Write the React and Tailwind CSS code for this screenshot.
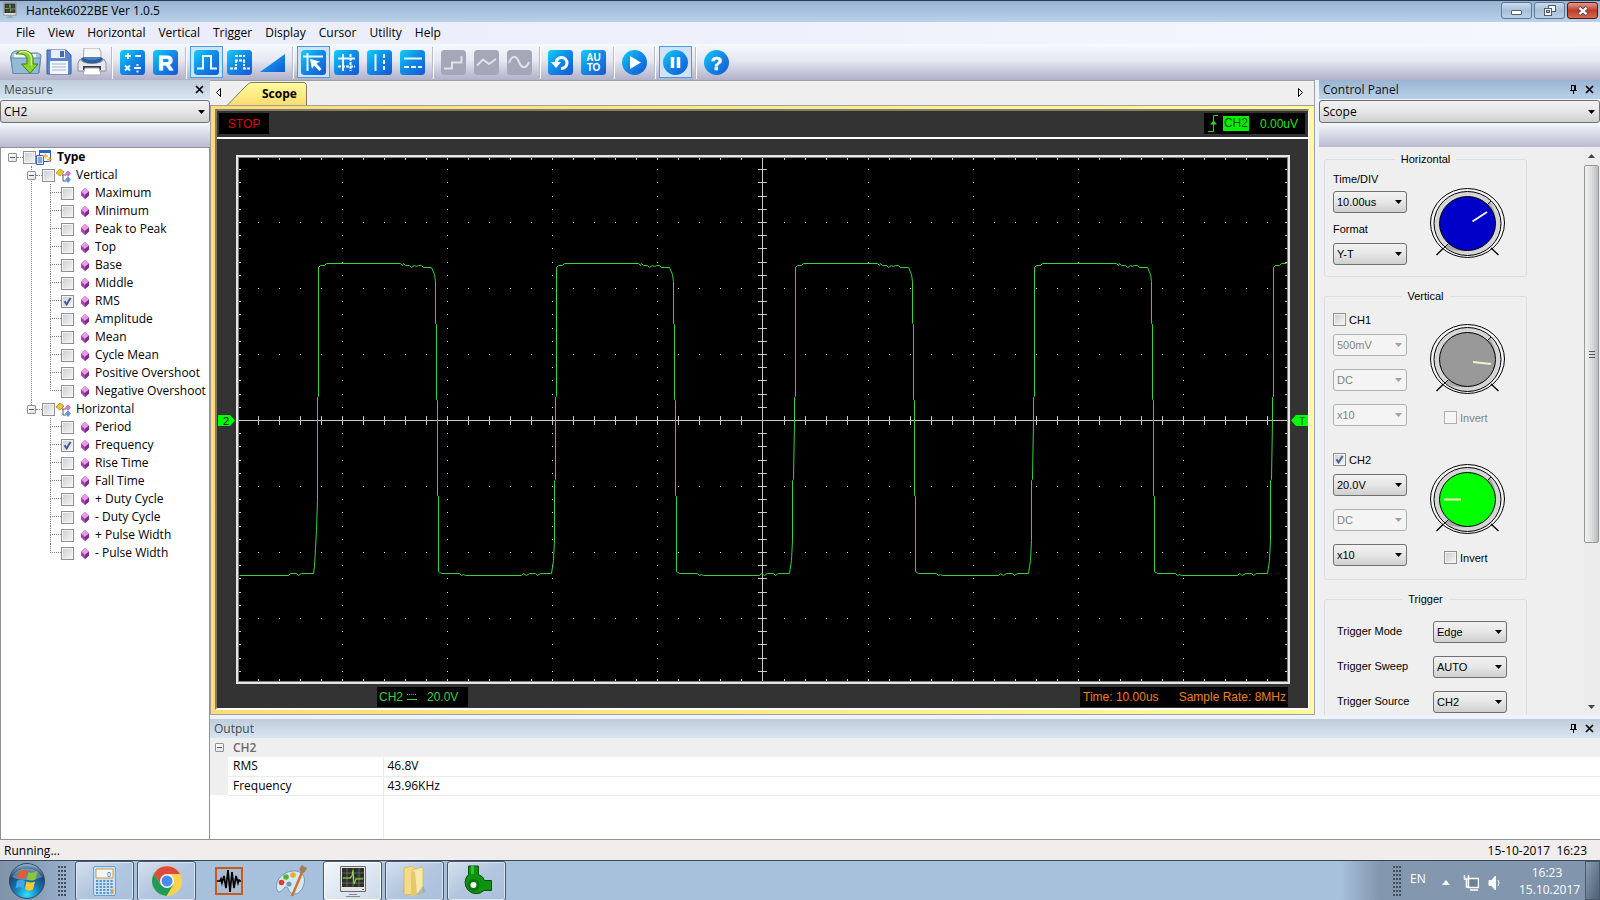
import { useState } from 'react';
import clsx from 'clsx';

const MENUS = ['File', 'View', 'Horizontal', 'Vertical', 'Trigger', 'Display', 'Cursor', 'Utility', 'Help'];

const VERTICAL_ITEMS = [
  'Maximum', 'Minimum', 'Peak to Peak', 'Top', 'Base', 'Middle', 'RMS',
  'Amplitude', 'Mean', 'Cycle Mean', 'Positive Overshoot', 'Negative Overshoot'
];

const HORIZONTAL_ITEMS = [
  'Period', 'Frequency', 'Rise Time', 'Fall Time',
  '+ Duty Cycle', '- Duty Cycle', '+ Pulse Width', '- Pulse Width'
];

const MEASUREMENTS = [
  { name: 'RMS', value: '46.8V' },
  { name: 'Frequency', value: '43.96KHz' }
];

const TRIGGER_FIELDS = [
  { id: 'trigger-mode', label: 'Trigger Mode', value: 'Edge' },
  { id: 'trigger-sweep', label: 'Trigger Sweep', value: 'AUTO' },
  { id: 'trigger-source', label: 'Trigger Source', value: 'CH2' }
];

/* ---------- Shared controls ---------- */

function Select({ id, label, value, disabled, className }) {
  return (
    <div className={clsx('relative', className)}>
      <select
        id={id}
        aria-label={label}
        defaultValue={value}
        disabled={disabled}
        className={clsx(
          'block h-full w-full appearance-none rounded-[3px] border pl-[3px] outline-none',
          disabled
            ? 'border-[#adb2b5] bg-[#f4f4f4] text-[#838383] opacity-100'
            : 'border-[#707070] bg-linear-to-b from-[#f2f2f2] via-[#e6e6e6] to-[#cfcfcf] text-black'
        )}
      >
        <option>{value}</option>
      </select>
      <svg
        viewBox="0 0 7 4"
        className={clsx(
          'pointer-events-none absolute right-[5px] top-1/2 h-1 w-[7px] -translate-y-1/2',
          disabled ? 'fill-[#a0a0a0]' : 'fill-black'
        )}
      >
        <path d="M0 0h7L3.5 4z" />
      </svg>
    </div>
  );
}

function Checkbox({ id, checked, disabled }) {
  const [on, setOn] = useState(!!checked);
  return (
    <span className="relative block size-[13px] shrink-0">
      <input
        id={id}
        type="checkbox"
        checked={on}
        disabled={disabled}
        onChange={e => setOn(e.target.checked)}
        className={clsx(
          'block size-[13px] appearance-none border',
          disabled
            ? 'border-[#b1b1b1] bg-[#f6f6f6]'
            : 'border-[#8e8f8f] bg-linear-to-br from-[#c9cdd2] to-[#f6f6f6] shadow-[inset_0_0_0_1px_#f4f4f4]'
        )}
      />
      {on && (
        <svg viewBox="0 0 13 13" className="pointer-events-none absolute inset-0">
          <path d="M3.5 6.2 5.6 9.4 9.6 3" fill="none" stroke="#4b5f9c" strokeWidth="2" />
        </svg>
      )}
    </span>
  );
}

function PinIcon() {
  return (
    <svg viewBox="0 0 9 9" className="size-[9px]" shapeRendering="crispEdges">
      <path d="M2 0h5v5h1v1H5v3H4V6H1V5h1zM3 1v4h2V1z" fillRule="evenodd" />
    </svg>
  );
}

function CloseIcon() {
  return (
    <svg viewBox="0 0 9 9" className="size-[9px]">
      <path d="M1 1l7 7M8 1 1 8" stroke="#000" strokeWidth="1.7" />
    </svg>
  );
}

function PanelHeader({ title, active, pin }) {
  return (
    <div
      className={clsx(
        'flex h-[19px] shrink-0 items-center pl-1 pr-1.5 leading-[19px]',
        active
          ? 'bg-linear-to-b from-[#99b4d1] to-[#b9d1ea] text-[#111]'
          : 'bg-linear-to-b from-[#bfcddb] to-[#d7e4f2] text-[#434e54]'
      )}
    >
      <h2 className="flex-1">{title}</h2>
      {pin && (
        <button aria-label={`Pin ${title}`} className="mr-[7px]">
          <PinIcon />
        </button>
      )}
      <button aria-label={`Close ${title}`}>
        <CloseIcon />
      </button>
    </div>
  );
}

/* ---------- Title bar and toolbar ---------- */

function MonitorIcon({ className }) {
  return (
    <svg viewBox="0 0 28 32" className={className}>
      <path d="M1.5 1.5h25v25h-25z" fill="#e3e3df" stroke="#6b6b6b" />
      <path d="M3 3h22v19H3z" fill="#2a2f2a" />
      <path d="M3 8h22M3 13h22M3 18h22M8 3v19M14 3v19M20 3v19" stroke="#777d77" strokeWidth=".7" />
      <path d="M4 13h7l2-2 1-6 1 14 2-5h7" fill="none" stroke="#8fe03a" strokeWidth="1.1" />
      <path d="M23 24h2v1h-2z" fill="#d33" />
      <path d="M10 29h8v1h-8zM7 31h14v1H7z" fill="#888" />
    </svg>
  );
}

function TitleBar() {
  return (
    <header className="flex h-[22px] shrink-0 items-start border-t border-[#2b3a50] bg-linear-to-b from-[#98b3d1] to-[#b9d1ea] pl-[3px] pr-[2px]">
      <MonitorIcon className="mt-px h-4 w-3.5" />
      <h1 className="ml-[9px] flex-1 leading-5">Hantek6022BE Ver 1.0.5</h1>
      <div className="flex gap-0.5 pt-px">
        <button aria-label="Minimize" className="flex h-[17px] w-[31px] items-center justify-center rounded-[3px] border border-[#5d7894] bg-linear-to-b from-[#c9dbee] via-[#a6bfda] to-[#b8cfe6]">
          <span className="mt-1 h-[5px] w-[11px] rounded-[1px] border border-[#555f6b] bg-white" />
        </button>
        <button aria-label="Restore" className="flex h-[17px] w-[31px] items-center justify-center rounded-[3px] border border-[#5d7894] bg-linear-to-b from-[#c9dbee] via-[#a6bfda] to-[#b8cfe6]">
          <svg viewBox="0 0 12 11" className="h-[11px] w-3" fill="#f4f7fa" stroke="#535d69" shapeRendering="crispEdges">
            <path d="M4.5.5h7v6h-7z" />
            <path d="M.5 3.5h7v7h-7z" />
            <path d="M2.5 5.5h3v2h-3z" fill="#a6bfda" />
          </svg>
        </button>
        <button aria-label="Close" className="flex h-[17px] w-[31px] items-center justify-center rounded-[3px] border border-[#5a1712] bg-linear-to-b from-[#dd9a8c] via-[#bf3b26] to-[#d26a50]">
          <svg viewBox="0 0 12 10" className="h-2.5 w-3">
            <path d="M2 1.5l8 7M10 1.5l-8 7" stroke="#5c4048" strokeWidth="4" />
            <path d="M2.4 1.8l7.2 6.4M9.6 1.8 2.4 8.2" stroke="#fff" strokeWidth="2.3" />
          </svg>
        </button>
      </div>
    </header>
  );
}

function Blue({ children, round, gray }) {
  return (
    <svg viewBox="0 0 25 25" className="size-[25px]" fill="none" stroke={gray ? '#dfe2ea' : '#e8fbff'} strokeWidth="2">
      <defs>
        <linearGradient id="blueFill" x1="0" y1="0" x2="1" y2="1">
          <stop offset="0" stopColor="#10d0f8" />
          <stop offset=".45" stopColor="#118ee8" />
          <stop offset="1" stopColor="#1556d4" />
        </linearGradient>
      </defs>
      {round ? (
        <circle cx="12.5" cy="12.5" r="12.5" fill="url(#blueFill)" stroke="none" />
      ) : (
        <rect width="25" height="25" rx="3.5" fill={gray ? '#a3a7b7' : 'url(#blueFill)'} stroke="none" />
      )}
      {children}
    </svg>
  );
}

function ToolButton({ label, active, children }) {
  return (
    <button
      aria-label={label}
      className={clsx(
        'flex h-8 w-[33px] items-center justify-center border',
        active ? 'border-[#4a9be8] bg-[#cfe3f8]' : 'border-transparent'
      )}
    >
      {children}
    </button>
  );
}

function Separator() {
  return <span className="mx-[3px] mt-px h-8 w-0.5 border-l border-r border-l-[#b9bccb] border-r-white" />;
}

const glyphFont = 'font-["Liberation_Sans"] font-bold';

function Toolbar() {
  return (
    <div role="toolbar" className="flex h-9 shrink-0 items-start bg-linear-to-b from-[#f6f9fd] via-[#e6e8f2] via-45% to-[#b1b1c9] pl-[9px] pt-[2px]">
      <ToolButton label="Open">
        <svg viewBox="0 0 32 27" className="h-[27px] w-8 shrink-0">
          <path d="M2 4l3-2h8l2 2h13l3 2-2 18H3L.5 8z" fill="#a9c6da" stroke="#5b86a5" />
          <path d="M4 5h22v4H4z" fill="#eef5fa" />
          <path d="M1 9h29.5l-2 15.500H3z" fill="#94bad4" stroke="#5f8dad" />
          <path d="M6 5C8 1 20-1 23 8v7h5l-8 9.500L11.500 15H17V9C15 4 9 5 6 5z" fill="#8ed02c" stroke="#3c7f10" />
          <path d="M9 3.500c5-2 11-1 12.500 5v8" fill="none" stroke="#d3f28a" strokeWidth="1.5" />
        </svg>
      </ToolButton>
      <ToolButton label="Save">
        <svg viewBox="0 0 26 26" className="size-[26px]">
          <path d="M1 1h19l5 5v19H1z" fill="#5d87d2" stroke="#3c5da5" />
          <path d="M5 1h14v8H5z" fill="#e9eff8" />
          <path d="M14 2h4v6h-4z" fill="#4569b3" />
          <path d="M4 12h18v13H4z" fill="#f5f8fc" />
          <path d="M6 15h14M6 18h14M6 21h14" stroke="#9fb4d3" />
        </svg>
      </ToolButton>
      <ToolButton label="Print">
        <svg viewBox="0 0 30 28" className="h-7 w-[30px] shrink-0">
          <path d="M7 0h15l2 4v8H6z" fill="#f7f7f8" stroke="#a7a7ad" />
          <path d="M6 9h18v6H6z" fill="#4d82bd" />
          <path d="M3 11c2 6 22 6 24 0l2 4v8H1v-8z" fill="#e6e8ec" stroke="#8c8f99" />
          <path d="M5 10c3 5 17 5 20 0" fill="none" stroke="#2e5e9c" strokeWidth="3" />
          <path d="M6 18h18v4H6z" fill="#3b3e47" />
          <path d="M8 20h14l2 7H6z" fill="#fff" stroke="#a7a7ad" />
        </svg>
      </ToolButton>
      <Separator />
      <ToolButton label="Math">
        <Blue>
          <path d="M5 6h6M8 3v6M15 6h6M5 15.500l5 5M10 15.500l-5 5M14 18h7" />
          <path d="M17.500 14v2M17.500 20.500v2" />
        </Blue>
      </ToolButton>
      <ToolButton label="Reference">
        <Blue>
          <text x="12.500" y="20" textAnchor="middle" fontSize="21" fill="#fff" stroke="#fff" strokeWidth=".8" className={glyphFont}>R</text>
        </Blue>
      </ToolButton>
      <Separator />
      <ToolButton label="Square wave" active>
        <Blue><path d="M3 18.500h6V6h8v12.500h6" /></Blue>
      </ToolButton>
      <ToolButton label="Persist wave">
        <Blue>
          <path d="M8 6h10M8 10.500h10" strokeDasharray="3 1" />
          <path d="M9 11v7M17 11v7" strokeDasharray="2 1" />
          <path d="M3 18.500h7M16 18.500h7" strokeDasharray="3 1" />
        </Blue>
      </ToolButton>
      <ToolButton label="Ramp">
        <svg viewBox="0 0 25 25" className="size-[25px]">
          <path d="M0 22 25 4v18z" fill="url(#blueFill)" />
        </svg>
      </ToolButton>
      <Separator />
      <ToolButton label="Cursor track" active>
        <Blue>
          <path d="M2 6.500h20M6.500 3v18" />
          <path d="M9 9l10 2.500-3.500 2 5 5.500-2 2-5.500-5.500-2 3.500z" fill="#fff" stroke="none" />
        </Blue>
      </ToolButton>
      <ToolButton label="Cross cursor">
        <Blue>
          <path d="M9 4v17M4 8.500h17" />
          <path d="M16.500 4v17M4 16.500h17" strokeDasharray="3 1" />
        </Blue>
      </ToolButton>
      <ToolButton label="Vertical cursor">
        <Blue>
          <path d="M8.500 4v17" />
          <path d="M17 4v18" strokeDasharray="4 2" />
        </Blue>
      </ToolButton>
      <ToolButton label="Horizontal cursor">
        <Blue>
          <path d="M4 8.500h18" />
          <path d="M4 17h18" strokeDasharray="5 2" />
        </Blue>
      </ToolButton>
      <Separator />
      <ToolButton label="Step">
        <Blue gray><path d="M3 18.500h8v-6h9.500V6" /></Blue>
      </ToolButton>
      <ToolButton label="Linear">
        <Blue gray><path d="M3 15.500 9 9.500l6 4.500 7-5" /></Blue>
      </ToolButton>
      <ToolButton label="Sine">
        <Blue gray><path d="M2 13C5 5 9 5 12 12s7 7 10 0" /></Blue>
      </ToolButton>
      <Separator />
      <ToolButton label="Refresh">
        <Blue>
          <path d="M8 13A5.500 5.500 0 1 1 13 18.500" strokeWidth="3" stroke="#fff" />
          <path d="M3 12h10l-5 6z" fill="#fff" stroke="none" />
        </Blue>
      </ToolButton>
      <ToolButton label="Auto set">
        <Blue>
          <text x="12.500" y="11" textAnchor="middle" fontSize="10" fill="#fff" stroke="none" className={glyphFont}>AU</text>
          <text x="12.500" y="21" textAnchor="middle" fontSize="10" fill="#fff" stroke="none" className={glyphFont}>TO</text>
        </Blue>
      </ToolButton>
      <Separator />
      <ToolButton label="Start">
        <Blue round><path d="M8 6v13l11-6.500z" fill="#fff" stroke="none" /></Blue>
      </ToolButton>
      <Separator />
      <ToolButton label="Pause" active>
        <Blue round><path d="M9.500 7v11M15.500 7v11" strokeWidth="3.5" stroke="#fff" /></Blue>
      </ToolButton>
      <Separator />
      <ToolButton label="Help">
        <Blue round>
          <text x="12.500" y="19.500" textAnchor="middle" fontSize="19" fill="#fff" stroke="#fff" strokeWidth=".6" className={glyphFont}>?</text>
        </Blue>
      </ToolButton>
    </div>
  );
}

/* ---------- Measure tree ---------- */

function Expander() {
  return (
    <span className="relative z-10 flex size-[9px] shrink-0 items-center justify-center rounded-[1px] border border-[#919191] bg-linear-to-br from-white to-[#e0e0e0]">
      <span className="h-px w-[5px] bg-[#3a5bb0]" />
    </span>
  );
}

function TreeItem({ name, last }) {
  const id = `measure-${name}`;
  return (
    <li className="flex h-[18px] items-center">
      <span className="w-[11px] shrink-0">
        <span className="block h-[9px] border-b border-l border-dotted border-[#808080]" />
        <span className={clsx('block h-[9px]', !last && 'border-l border-dotted border-[#808080]')} />
      </span>
      <Checkbox id={id} checked={name === 'RMS' || name === 'Frequency'} />
      <svg viewBox="0 0 8 11" className="ml-[7px] h-[11px] w-2 shrink-0">
        <path d="M4 0l4 3.500v4L4 11 0 7.500v-4z" fill="#a344a8" />
        <path d="M4 0l4 3.500L4 7 0 3.500z" fill="#e69ae8" />
        <path d="M4 7l4-3.500v4L4 11z" fill="#7c2c86" />
      </svg>
      <label htmlFor={id} className="ml-1.5 whitespace-nowrap">{name}</label>
    </li>
  );
}

function TreeGroup({ name, items, last }) {
  const id = `group-${name}`;
  return (
    <li className={clsx('relative ml-[30px]', last ? 'pl-px' : 'border-l border-dotted border-[#808080]')}>
      {last && <span className="absolute left-0 top-0 h-[9px] border-l border-dotted border-[#808080]" />}
      <div className="-ml-[5px] flex h-[18px] items-center">
        <Expander />
        <span className="w-1.5 shrink-0 border-t border-dotted border-[#808080]" />
        <Checkbox id={id} />
        <svg viewBox="0 0 16 15" className="h-[15px] w-4 shrink-0">
          <path d="M1 5l4-4 4 3-4 4z" fill="#f1c232" stroke="#a77b10" strokeWidth=".7" />
          <path d="M7 7h4M8 7v6h3" fill="none" stroke="#557" />
          <path d="M13 3l2.500 2.500L13 8.500l-2.500-3z" fill="#d976dc" stroke="#94389a" strokeWidth=".5" />
          <path d="M13 9l2.500 2.500L13 14.500l-2.500-3z" fill="#5b9bea" stroke="#2a5ea8" strokeWidth=".5" />
        </svg>
        <label htmlFor={id} className="ml-[5px]">{name}</label>
      </div>
      <ul className="ml-[18px]">
        {items.map((item, i) => (
          <TreeItem key={item} name={item} last={i === items.length - 1} />
        ))}
      </ul>
    </li>
  );
}

function MeasurePanel() {
  return (
    <aside className="flex w-[210px] shrink-0 flex-col">
      <PanelHeader title="Measure" />
      <Select label="Measure source" value="CH2" className="mt-px h-[23px]" />
      <div className="h-6 shrink-0 bg-linear-to-b from-[#f4f7fc] to-[#babad0]" />
      <ul className="flex-1 border border-[#8f9299] bg-white">
        <li>
          <div className="flex h-[18px] items-center pl-[7px]">
            <Expander />
            <span className="w-1.5 shrink-0 border-t border-dotted border-[#808080]" />
            <Checkbox id="measure-type" />
            <svg viewBox="0 0 16 15" className="h-[15px] w-4 shrink-0">
              <path d="M3.500.5h11v11h-11z" fill="#fff" stroke="#2b55b5" />
              <path d="M3 0h12v3H3z" fill="#2b62d0" />
              <path d="M.5 5.500h7v9h-7z" fill="#dbe8fb" stroke="#3d62b5" />
              <path d="M2 8h4M2 10h4M2 12h4" stroke="#3d62b5" />
              <path d="M7 6h5M9.500 3.500v5M11 9.500h5M13.500 7v5" stroke="#e8b818" strokeWidth="1.500" />
            </svg>
            <label htmlFor="measure-type" className="ml-[5px] font-bold">Type</label>
          </div>
          <ul>
            <TreeGroup name="Vertical" items={VERTICAL_ITEMS} />
            <TreeGroup name="Horizontal" items={HORIZONTAL_ITEMS} last />
          </ul>
        </li>
      </ul>
    </aside>
  );
}

/* ---------- Scope ---------- */

// one full cycle of the trace, relative to its rising edge
const CYCLE = [
  [0, 420], [0, 397], [1, 396], [1, 267], [3, 265], [7, 265], [9, 263], [83, 263],
  [85, 265], [86, 263], [88, 265], [92, 265], [94, 267], [97, 265], [99, 266], [101, 265], [104, 265],
  [106, 267], [114, 267], [117, 274], [118, 281], [118, 323], [119, 324], [119, 399], [120, 400],
  [120, 495], [121, 496], [121, 571], [124, 573], [142, 573], [144, 575], [146, 574], [148, 575],
  [204, 575], [206, 573], [209, 575], [212, 573], [218, 573], [220, 575], [223, 573], [234, 573],
  [236, 560], [237, 540], [237, 480], [238, 479]
];

const EDGES = [317, 555, 794, 1033, 1272];

function tracePoints() {
  const pts = [[239, 575], [288, 575], [290, 573], [296, 573], [298, 575], [301, 573], [313, 573], [314, 566], [315, 548], [316, 530], [317, 500]];
  EDGES.forEach(x => {
    CYCLE.forEach(([dx, y]) => {
      if (x + dx <= 1287) pts.push([x + dx, y]);
    });
  });
  pts.push([1286, 263]);
  return pts.map(([x, y]) => `${x + 0.5},${y + 0.5}`).join(' ');
}

const gridX = i => 237 + i * 21 + (i > 25 ? 1 : 0);
const gridY = i => Math.round(420 + (i - 20) * 13.2);

function Graticule() {
  const dots = [];
  const ticks = [];
  for (let i = 1; i < 50; i++) {
    const x = gridX(i);
    ticks.push(`M${x} 158v2h1v-2zM${x} 679v2h1v-2zM${x} 416v9h1v-9z`);
    for (let j = 5; j < 40; j += 5) dots.push(`M${x} ${gridY(j)}h1v1h-1z`);
  }
  for (let j = 1; j < 40; j++) {
    const y = gridY(j);
    ticks.push(`M239 ${y}h2v1h-2zM1285 ${y}h2v1h-2zM758 ${y}h9v1h-9z`);
    for (let i = 5; i < 50; i += 5) dots.push(`M${gridX(i)} ${y}h1v1h-1z`);
  }
  return (
    <svg viewBox="236 155 1054 529" preserveAspectRatio="none" className="block h-full w-full min-w-0 flex-1">
      <g shapeRendering="crispEdges">
        <path d="M236 155h1054v529H236z" fill="#e6e6e6" />
        <path d="M238 157h1050v525H238z" fill="#808080" />
        <path d="M239 158h1048v523H239z" fill="#000" />
        <path d={dots.join('')} fill="#f0f0f0" />
        <path d={ticks.join('')} fill="#c8c8c8" />
        <path d="M239 420h1048v1H239z" fill="#c8c8c8" />
        <path d="M762 158h1v523h-1z" fill="#c8c8c8" />
      </g>
      <polyline points={tracePoints()} fill="none" stroke="#35d53a" strokeWidth="1" />
    </svg>
  );
}

function ScopeView() {
  return (
    <main className="flex min-w-0 flex-1 flex-col border-r border-[#a0a0a0]">
      {/* Tabs */}
      <div className="flex h-[25px] shrink-0 items-end border-t border-[#a0a0a0] bg-[#efefef] pl-1.5">
        <button aria-label="Previous tab" className="mb-2">
          <svg viewBox="0 0 5 9" className="h-[9px] w-[5px]"><path d="M4.500.5v8l-4-4z" fill="none" stroke="#000" /></svg>
        </button>
        <button role="tab" aria-selected="true" className="relative ml-1.5 h-[23px] w-20 pl-[35px] text-left font-bold leading-[22px]">
          <svg viewBox="0 0 80 23" className="absolute inset-0 h-full w-full">
            <defs>
              <linearGradient id="tabFill" x1="0" y1="0" x2="0" y2="1">
                <stop offset="0" stopColor="#fffb9c" />
                <stop offset="1" stopColor="#fddb70" />
              </linearGradient>
            </defs>
            <path d="M0 23.500 20 3q2-2.500 5-2.500h52.500l2 2v21" fill="url(#tabFill)" stroke="#7d7d6a" />
          </svg>
          <span className="relative">Scope</span>
        </button>
        <button aria-label="Next tab" className="mb-2 ml-auto mr-[11px]">
          <svg viewBox="0 0 5 9" className="h-[9px] w-[5px]"><path d="M.5.5v8l4-4z" fill="none" stroke="#000" /></svg>
        </button>
      </div>

      {/* Yellow frame */}
      <div className="flex min-h-0 flex-1 flex-col border-b border-l border-t border-[#a0a0a0] bg-linear-to-r from-[#fddb75] to-[#fffa9c] pb-1 pl-1 pr-[5px] pt-[3px]">
        <div className="flex min-h-0 flex-1 flex-col border-b-2 border-l-2 border-r border-t-2 border-b-white border-l-[#807c6c] border-r-white border-t-[#807c6c] bg-[#333] font-['Liberation_Sans'] text-[12px]">
          <div className="flex h-7 shrink-0 items-start justify-between border-b-2 border-white pl-[2px] pr-[3px] pt-[2px]">
            <div className="flex h-[21px] w-[50px] items-center justify-center bg-black text-[#e00000]">STOP</div>
            <div className="flex h-[21px] items-center bg-black pl-1 pr-[7px] text-[#1fe01f]">
              <svg viewBox="0 0 10 17" className="h-[17px] w-2.5" fill="none" stroke="#1fe01f">
                <path d="M0 16.500h5.500v-16H10" />
                <path d="M2 9.500h7L5.500 5.500z" fill="#1fe01f" stroke="none" />
              </svg>
              <span className="ml-[5px] bg-[#00f000] px-px leading-[15px] text-[#0c4a0c]">CH2</span>
              <span className="ml-[11px]">0.00uV</span>
            </div>
          </div>

          <div className="flex min-h-0 flex-1 pt-4">
            <div className="flex w-[19px] shrink-0 items-center pl-px pt-[2px]">
              <svg viewBox="0 0 17 11" className="h-[11px] w-[17px]">
                <path d="M0 0h12l5 5.500-5 5.500H0z" fill="#0f0" />
                <text x="8" y="9.500" textAnchor="middle" fontSize="11" fill="#000" className="font-['Liberation_Sans']">2</text>
              </svg>
            </div>
            <Graticule />
            <div className="flex w-[18px] shrink-0 items-center pl-px pt-[2px]">
              <svg viewBox="0 0 17 11" className="h-[11px] w-[17px]">
                <path d="M17 0H5L0 5.500 5 11h12z" fill="#0f0" />
                <text x="11" y="9.500" textAnchor="middle" fontSize="11" fill="#063" className="font-['Liberation_Sans']">T</text>
              </svg>
            </div>
          </div>

          <div className="flex shrink-0 justify-between pb-px pl-40 pr-5 pt-[3px] leading-5">
            <div className="flex items-center bg-black pl-[2px] pr-2.5 text-[#35d53a]">
              CH2
              <svg viewBox="0 0 10 6" className="ml-1 h-1.5 w-2.5" stroke="#35d53a" shapeRendering="crispEdges">
                <path d="M0 .5h10" strokeDasharray="1 1" />
                <path d="M0 5.500h10" />
              </svg>
              <span className="ml-2.5">20.0V</span>
            </div>
            <div className="flex gap-5 bg-black pl-[3px] pr-[2px] text-[#f08018]">
              <span>Time: 10.00us</span>
              <span>Sample Rate: 8MHz</span>
            </div>
          </div>
        </div>
      </div>
    </main>
  );
}

/* ---------- Control panel ---------- */

function Knob({ color, pointer, pointerColor, label }) {
  return (
    <svg viewBox="0 0 75 70" role="img" aria-label={label} className="h-[70px] w-[75px]" stroke="#000">
      <ellipse cx="37.500" cy="35" rx="37" ry="34.500" fill="#f4f4f4" />
      <path d="M13.500 60 6.500 67M61 60l7.500 7" strokeWidth="1.3" />
      <ellipse cx="37.500" cy="35.500" rx="33.500" ry="32" fill="#d6d6d6" />
      <path d="M60 14A33.500 32 0 0 1 15 59L20 54 56 18z" fill="#ababab" stroke="none" />
      <path d="M56 18l5-5M18 56l-4 4" />
      <ellipse cx="37.500" cy="35.500" rx="28" ry="27" fill={color} />
      <path d={pointer} stroke={pointerColor} strokeWidth="2" />
    </svg>
  );
}

function Group({ title, children, className }) {
  return (
    <fieldset className={clsx('min-w-0 rounded-[3px] border border-[#d5dfe5]', className)}>
      <legend className="mx-auto h-3.5 px-1.5 leading-[14px]">{title}</legend>
      {children}
    </fieldset>
  );
}

function Channel({ name, scale, probe, on, color, pointer, pointerColor }) {
  return (
    <div className="flex">
      <div className="flex w-[74px] flex-col gap-[13px]">
        <div>
          <label className="mb-2 flex h-[13px] items-center gap-[3px]">
            <Checkbox checked={on} />
            {name}
          </label>
          <Select label={`${name} volts per division`} value={scale} disabled={!on} className="h-[22px]" />
        </div>
        <Select label={`${name} coupling`} value="DC" disabled className="h-[22px]" />
        <Select label={`${name} probe`} value={probe} disabled={!on} className="h-[22px]" />
      </div>
      <div className="ml-[23px] pt-[11px]">
        <Knob color={color} pointer={pointer} pointerColor={pointerColor} label={`${name} scale`} />
        <label className={clsx('ml-3.5 mt-[17px] flex h-[13px] items-center gap-[3px]', !on && 'text-[#838383]')}>
          <Checkbox disabled={!on} />
          Invert
        </label>
      </div>
    </div>
  );
}

function ControlPanel() {
  return (
    <aside className="flex w-[281px] shrink-0 flex-col bg-[#efefef]">
      <PanelHeader title="Control Panel" active pin />
      <Select label="Control page" value="Scope" className="mt-px h-[23px]" />
      <div className="h-6 shrink-0 bg-linear-to-b from-[#f4f7fc] to-[#babad0]" />

      <div className="flex min-h-0 flex-1">
        <div className="min-h-0 flex-1 overflow-hidden pl-[5px] pt-[5px] font-['Liberation_Sans'] text-[11px]">
          <div className="w-[203px]">
            <Group title="Horizontal" className="px-2 pb-[11px]">
              <div className="flex">
                <div className="w-[74px] pt-1.5">
                  <label htmlFor="time-div" className="block h-[19px] leading-[14px]">Time/DIV</label>
                  <Select id="time-div" value="10.00us" className="h-[22px]" />
                  <label htmlFor="format" className="mt-[9px] block h-[21px] leading-[14px]">Format</label>
                  <Select id="format" value="Y-T" className="h-[22px]" />
                </div>
                <div className="ml-[23px] pt-[22px]">
                  <Knob color="#0000c8" pointer="M42.500 33.500 57 24" pointerColor="#f4f4f4" label="Time base" />
                </div>
              </div>
            </Group>

            <Group title="Vertical" className="mt-3 flex flex-col gap-[27px] px-2 pb-[13px] pt-2.5">
              <Channel name="CH1" scale="500mV" probe="x10" color="#999" pointer="M43 38l18 2" pointerColor="#f4f4c0" />
              <Channel name="CH2" scale="20.0V" probe="x10" on color="#0f0" pointer="M14 35.500h17" pointerColor="#f4f4c0" />
            </Group>

            <Group title="Trigger" className="mt-3 px-3">
              <div className="flex flex-col gap-[13px] pb-3 pt-[15px]">
                {TRIGGER_FIELDS.map(f => (
                  <div key={f.id} className="flex h-[22px]">
                    <label htmlFor={f.id} className="w-24 leading-5">{f.label}</label>
                    <Select id={f.id} value={f.value} className="h-[22px] w-[74px]" />
                  </div>
                ))}
              </div>
            </Group>
          </div>
        </div>

        {/* Scrollbar */}
        <div className="flex w-4 shrink-0 flex-col items-center bg-[#ececec] pr-px">
          <svg viewBox="0 0 7 4" className="my-[7px] h-1 w-[7px] fill-[#444]"><path d="M0 4h7L3.500 0z" /></svg>
          <div className="flex h-[378px] w-[15px] flex-col items-center justify-center gap-0.5 rounded-[2px] border border-[#989898] bg-linear-to-r from-[#f2f2f2] via-[#dedee0] to-[#b9bbc0]">
            <span className="h-px w-1.5 bg-[#555]" />
            <span className="h-px w-1.5 bg-[#555]" />
            <span className="h-px w-1.5 bg-[#555]" />
          </div>
          <svg viewBox="0 0 7 4" className="mb-1.5 mt-auto h-1 w-[7px] fill-[#444]"><path d="M0 0h7L3.500 4z" /></svg>
        </div>
      </div>
    </aside>
  );
}

/* ---------- Output ---------- */

function OutputPanel() {
  return (
    <section className="mt-1 flex h-[121px] shrink-0 flex-col border-b border-[#8f9299] bg-white">
      <PanelHeader title="Output" pin />
      <table className="h-full w-full border-collapse text-left">
        <tbody>
          <tr className="h-[19px] bg-[#efefef] text-[#6b6b6b]">
            <td className="w-[18px] p-0 pl-[5px]"><Expander /></td>
            <th colSpan={2} className="p-0 pl-[5px] font-semibold leading-[18px]">CH2</th>
          </tr>
          {MEASUREMENTS.map(m => (
            <tr key={m.name} className="h-[19px]">
              <td className="bg-[#efefef] p-0" />
              <th className="w-[155px] border-b border-r border-[#ebebeb] p-0 pl-[5px] font-normal leading-[18px]">{m.name}</th>
              <td className="border-b border-[#ebebeb] p-0 pl-1 leading-[18px]">{m.value}</td>
            </tr>
          ))}
          <tr>
            <td className="p-0" />
            <td className="border-r border-[#ebebeb] p-0" />
            <td className="p-0" />
          </tr>
        </tbody>
      </table>
    </section>
  );
}

/* ---------- Taskbar ---------- */

function Grip() {
  return (
    <svg viewBox="0 0 8 30" className="h-[30px] w-2" shapeRendering="crispEdges">
      {[0, 4, 8, 12, 16, 20, 24, 28].map(y => (
        <path key={y} d={`M0 ${y}h2v2H0zM3 ${y}h2v2H3zM6 ${y}h2v2H6z`} fill="#3f4d5e" />
      ))}
    </svg>
  );
}

function TaskButton({ label, open, active, children }) {
  return (
    <button
      aria-label={label}
      className={clsx(
        'flex h-10 w-[59px] items-center justify-center rounded-[3px] border',
        !open && 'border-transparent',
        open && !active && 'border-[#46586c] bg-linear-to-br from-[#d6e1ee] via-[#b2c6df] to-[#a9c0dc] shadow-[inset_0_0_0_1px_#dbe6f2]',
        active && 'border-[#46586c] bg-linear-to-br from-[#f3f7fb] via-[#dfe8f2] to-[#cbdaea] shadow-[inset_0_0_0_1px_#fff]'
      )}
    >
      {children}
    </button>
  );
}

function Taskbar() {
  return (
    <footer className="flex h-10 shrink-0 items-center border-t border-[#39485a] bg-[#a7c0dc]">
      <div className="flex h-full w-[75px] shrink-0 items-center bg-linear-to-r from-[#7f93aa] via-[#8a9fb8] to-[#a0b7d1] pl-2">
        <button aria-label="Start">
          <svg viewBox="0 0 38 38" className="size-[38px]">
            <defs>
              <radialGradient id="orb" cx=".5" cy=".9" r=".9">
                <stop offset="0" stopColor="#2fe0ff" />
                <stop offset=".4" stopColor="#1579b8" />
                <stop offset=".75" stopColor="#1d4670" />
                <stop offset="1" stopColor="#9fc3dc" />
              </radialGradient>
            </defs>
            <circle cx="19" cy="19" r="17.500" fill="url(#orb)" stroke="#31475d" />
            <path d="M4 15a16 13 0 0 1 30 0c-8 4-22 4-30 0z" fill="#fff" opacity=".3" />
            <path d="M11 10q4-3 8-1l-1.500 8q-4-2-8 0z" fill="#ee5a24" />
            <path d="M20.500 10q4 2 9-1l-2 8.500q-4 2-8.500 0z" fill="#8cc63e" />
            <path d="M9 19q4-2.500 8 0l-1.500 7.500q-4-2.500-8 0z" fill="#3fa9e8" />
            <path d="M18.500 19.500q4 2 8.500 0l-2 8q-4 2.500-8-.5z" fill="#fdc82f" />
          </svg>
        </button>
        <span className="ml-3"><Grip /></span>
      </div>

      <nav className="flex gap-[3px]">
        <TaskButton label="Calculator" open>
          <svg viewBox="0 0 24 30" className="h-[30px] w-6">
            <rect x=".5" y=".5" width="22" height="29" rx="1.500" fill="#c9e2f4" stroke="#6ba0c8" />
            <path d="M3 3h17v9H3z" fill="#eef6fb" stroke="#d8953a" />
            <text x="14" y="10.500" fontSize="7" fill="#456">0</text>
            {[15, 18, 21, 24, 27].map(y => (
              <path key={y} d={`M3 ${y}h17`} stroke="#5d92c4" strokeWidth="2" strokeDasharray="2.200 1.400" />
            ))}
            <path d="M18 23h2.500v5H18z" fill="#e9a23b" />
          </svg>
        </TaskButton>
        <TaskButton label="Chrome" open>
          <svg viewBox="0 0 30 30" className="size-[30px]">
            <circle cx="15" cy="15" r="15" fill="#ffd24d" />
            <path d="M2 7.500A15 15 0 0 0 14.500 30L21.500 18.500 15 15 8.500 18.500z" fill="#1f9d58" />
            <path d="M15 8h13A15 15 0 0 0 2 7.500l6.500 11z" fill="#dd4b3e" />
            <circle cx="15" cy="15" r="7" fill="#fff" />
            <circle cx="15" cy="15" r="5.500" fill="#4a8af4" />
          </svg>
        </TaskButton>
        <TaskButton label="Waveform editor">
          <svg viewBox="0 0 28 28" className="size-7">
            <rect x="1" y="1" width="26" height="26" fill="#a9bcd2" stroke="#c55c1c" strokeWidth="2" />
            <path d="M2 14h3l1-2 1 4 2-7 2 12 2-18 2 22 2-20 2 16 2-12 2 7 1-3 1 1h1" fill="none" stroke="#000" strokeWidth="1.700" />
          </svg>
        </TaskButton>
        <TaskButton label="Paint">
          <svg viewBox="0 0 32 32" className="size-8">
            <path d="M3 27C-2 18 6 7 18 6c9-1 13 6 11 13-2 8-8 12-13 9-3-2-2-6-5-6s-3 5-8 5z" fill="#d5e8f3" stroke="#6e9bb8" />
            <circle cx="6.500" cy="17.500" r="2.800" fill="#d8402c" />
            <circle cx="11" cy="12" r="2.800" fill="#58b32e" />
            <circle cx="18" cy="10" r="2.800" fill="#f0a92a" />
            <circle cx="14" cy="19" r="2.600" fill="#6c9cba" />
            <path d="M28 5 17 31" stroke="#c9762d" strokeWidth="2.500" />
            <path d="M25 6c-1-3 1-5 2-6 2 2 4 2 5 3-1 3-3 5-5 5z" fill="#a57b5b" />
          </svg>
        </TaskButton>
        <TaskButton label="Hantek6022BE" open active>
          <MonitorIcon className="h-8 w-7" />
        </TaskButton>
        <TaskButton label="Explorer" open>
          <svg viewBox="0 0 24 30" className="h-[30px] w-6">
            <path d="M1 2l8-2 4 3v25L1 29z" fill="#f3dc86" stroke="#cfae4e" strokeWidth=".7" />
            <path d="M9 4l11-3v26l-8 2z" fill="#f8e9a8" stroke="#d0b45c" strokeWidth=".7" />
            <path d="M12 5l2 24-6 1V7z" fill="#e6c96a" />
            <path d="M20 20l3 6-10 3z" fill="#8aa2b5" opacity=".6" />
          </svg>
        </TaskButton>
        <TaskButton label="Green app" open>
          <svg viewBox="0 0 30 32" className="h-8 w-[30px]">
            <path d="M6.500 1h10v8.500q5 2 6 6H29.500v10H22a11 11 0 1 1-15.500-16z" fill="#0d930d" stroke="#064d06" />
            <path d="M9 1h3v8H9z" fill="#32c432" />
            <circle cx="11.500" cy="20" r="6" fill="#077707" />
            <circle cx="11.500" cy="20" r="3" fill="#fff" />
          </svg>
        </TaskButton>
      </nav>

      <div className="ml-auto flex h-full items-center bg-linear-to-r from-[#a7c0dc] via-[#8398af] via-15% to-[#8196ad] pl-[53px] text-white">
        <Grip />
        <span className="-mt-1 ml-[9px] w-[15px]">EN</span>
        <svg viewBox="0 0 8 5" className="ml-[17px] mt-1 h-[5px] w-2 fill-white"><path d="M0 5h8L4 0z" /></svg>
        <svg viewBox="0 0 16 16" className="ml-[13px] mt-1 size-4" fill="none" stroke="#fff">
          <path d="M5.500 3.500h10v9h-10z" fill="#6c7f94" strokeWidth="1.500" />
          <path d="M7 15h8M1.500 0v4h4V0M3.500 4v8h2" strokeWidth="1.500" />
        </svg>
        <svg viewBox="0 0 14 16" className="ml-[9px] mt-1 h-4 w-3.5" fill="#fff" stroke="#fff">
          <path d="M1 5.500h2.500l4-4.500v14l-4-4.500H1z" />
          <path d="M10 5q2 3 0 6" fill="none" />
        </svg>
        <div className="ml-[17px] w-[56px] text-center leading-[17px]">
          <div>16:23</div>
          <div>15.10.2017</div>
        </div>
        <button aria-label="Show desktop" className="ml-[10px] h-full w-[15px] border border-[#4a5a6c] bg-linear-to-br from-[#8a9cb0] to-[#4d6075]" />
      </div>
    </footer>
  );
}

export default function App() {
  return (
    <div className="flex h-screen flex-col overflow-hidden bg-[#edf3fc] font-['Open_Sans',sans-serif] text-[12px] leading-4 text-black">
      <TitleBar />
      <nav className="flex h-[22px] shrink-0 items-center gap-[13px] bg-linear-to-r from-[#e9ebfa] to-[#f4f8fd] pl-4">
        {MENUS.map(m => (
          <button key={m}>{m}</button>
        ))}
      </nav>
      <Toolbar />

      <div className="flex min-h-0 flex-1">
        <MeasurePanel />
        <div className="flex min-w-0 flex-1 flex-col">
          <div className="flex min-h-0 flex-1 gap-1">
            <ScopeView />
            <ControlPanel />
          </div>
          <OutputPanel />
        </div>
      </div>

      {/* Status bar */}
      <div className="flex h-5 shrink-0 items-center justify-between bg-[#f0edec] pl-1 pr-[13px] pt-px">
        <span>Running...</span>
        <time>15-10-2017&nbsp; 16:23</time>
      </div>
      <Taskbar />
    </div>
  );
}
